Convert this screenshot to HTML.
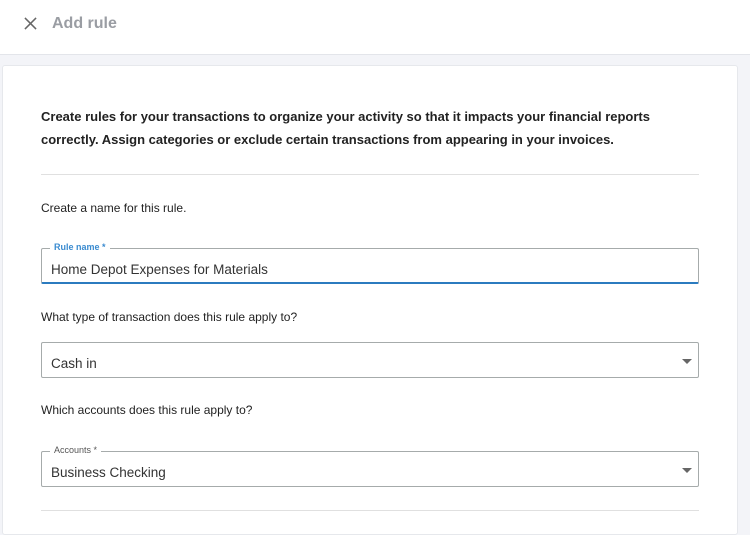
<!DOCTYPE html>
<html><head><style>
*{box-sizing:border-box;margin:0;padding:0}
body{width:750px;height:523px;overflow:hidden;background:#f3f4f8;font-family:"Liberation Sans",Arial,sans-serif;color:#222;position:relative}
.hdr{position:absolute;left:0;top:0;width:750px;height:55px;background:#fff;border-bottom:1px solid #e3e5ea}
.x{position:absolute;left:24px;top:17px}
.ttl{position:absolute;left:52px;top:15px;font-size:16px;font-weight:bold;color:#9a9da3}
.card{position:absolute;left:2px;top:65px;width:736px;height:470px;background:#fff;border:1px solid #e6e8ec;border-radius:3px}
.a{position:absolute;left:41px}
.intro{top:105px;font-size:13px;font-weight:bold;line-height:23px;color:#222;width:660px}
.hr{position:absolute;left:41px;width:658px;height:1px;background:#e0e0e0}
.q{font-size:12px;color:#222}
.box{position:absolute;left:41px;width:658px;height:36px;border:1px solid #a6abab;border-radius:2px;font-size:13.5px;color:#333;padding:12px 0 0 9px}
.lbl{position:absolute;left:8px;top:-7px;background:#fff;padding:0 4px;font-size:9px;color:#555}
.arr{position:absolute;right:6px;top:16px;width:0;height:0;border-left:5px solid transparent;border-right:5px solid transparent;border-top:5px solid #666}
</style></head><body>
<div class="hdr">
<svg class="x" width="13" height="13" viewBox="0 0 14 14"><path d="M1 1L13 13M13 1L1 13" stroke="#666" stroke-width="1.6"/></svg>
<div class="ttl">Add rule</div>
</div>
<div class="card"></div>
<div class="a intro">Create rules for your transactions to organize your activity so that it impacts your financial reports<br>correctly. Assign categories or exclude certain transactions from appearing in your invoices.</div>
<div class="hr" style="top:174px"></div>
<div class="a q" style="top:201px">Create a name for this rule.</div>
<div class="box" style="top:248px;border-bottom:2px solid #2b7bbf;padding-top:13px">Home Depot Expenses for Materials<div class="lbl" style="color:#3a8bd0;font-weight:bold">Rule name *</div></div>
<div class="a q" style="top:310px">What type of transaction does this rule apply to?</div>
<div class="box" style="top:342px;padding-top:13px">Cash in<div class="arr"></div></div>
<div class="a q" style="top:403px">Which accounts does this rule apply to?</div>
<div class="box" style="top:451px;padding-top:13px">Business Checking<div class="lbl">Accounts *</div><div class="arr"></div></div>
<div class="hr" style="top:510px"></div>
</body></html>
